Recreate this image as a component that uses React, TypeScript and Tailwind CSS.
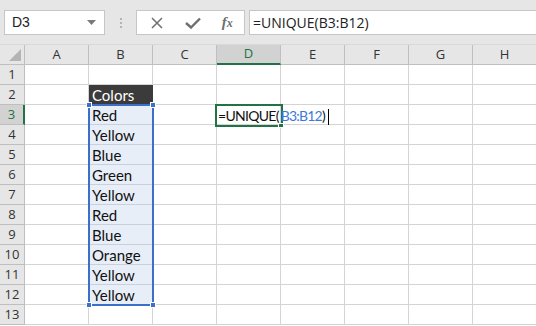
import React from "react";

const cols = ["A", "B", "C", "D", "E", "F", "G", "H"];
const colors = ["Red", "Yellow", "Blue", "Green", "Yellow", "Red", "Blue", "Orange", "Yellow", "Yellow"];

export default function App() {
  const rows = Array.from({ length: 13 }, (_, i) => i + 1);
  return (
    <div className="w-[536px] h-[326px] overflow-hidden bg-white relative" style={{ fontFamily: "'Open Sans', 'Noto Sans', sans-serif" }}>
      {/* toolbar */}
      <div className="h-[45px] bg-[#e6e6e6] flex items-start pt-[10px] pl-[4px] border-b border-[#d9d9d9]">
        <div className="w-[101px] h-[25px] bg-white border border-[#c6c6c6] flex items-center justify-between pl-[7px] pr-[8px]">
          <span className="text-[14px] text-[#222]" style={{ fontFamily: "'Liberation Sans', Arial, sans-serif" }}>D3</span>
          <svg width="9" height="5" viewBox="0 0 9 5"><polygon points="0,0 9,0 4.5,5" fill="#7a7a7a" /></svg>
        </div>
        <div className="w-[31px] h-[25px] flex flex-col items-center justify-center gap-[2px]">
          <div className="w-[2px] h-[2px] bg-[#b4b4b4]" />
          <div className="w-[2px] h-[2px] bg-[#b4b4b4]" />
          <div className="w-[2px] h-[2px] bg-[#b4b4b4]" />
        </div>
        <div className="w-[109px] h-[25px] bg-white border border-[#c6c6c6] flex items-center">
          <div className="w-[40px] flex justify-center">
            <svg width="12" height="12" viewBox="0 0 12 12"><path d="M1 1 L11 11 M11 1 L1 11" stroke="#6f6f6f" strokeWidth="1.5" /></svg>
          </div>
          <div className="w-[34px] flex justify-center">
            <svg width="16" height="12" viewBox="0 0 16 12"><path d="M1 6 L6 10.5 L15 1.5" stroke="#6f6f6f" strokeWidth="2.4" fill="none" /></svg>
          </div>
          <div className="w-[34px] flex justify-center">
            <span className="text-[15px] italic text-[#6f6f6f] font-bold" style={{ fontFamily: "'Liberation Serif', 'Times New Roman', serif" }}>f<span className="text-[12px]">x</span></span>
          </div>
        </div>
        <div className="ml-[4px] flex-1 h-[25px] bg-white border border-[#c6c6c6] border-r-0 flex items-center pl-[3px]">
          <span className="text-[14px] text-[#222]" style={{ fontFamily: "'Open Sans', sans-serif" }}>=UNIQUE(B3:B12)</span>
        </div>
      </div>

      {/* grid */}
      <div className="grid grid-cols-[25px_repeat(8,64px)] auto-rows-[20px]">
        <div className="bg-[#e6e6e6] border-r border-b border-[#bfbfbf] relative">
          <svg className="absolute right-[3px] bottom-[3px]" width="12" height="12" viewBox="0 0 12 12"><polygon points="12,0 12,12 0,12" fill="#b4b4b4" /></svg>
        </div>
        {cols.map((c) => (
          <div
            key={c}
            className={
              c === "D"
                ? "bg-[#d2d2d2] border-r border-[#bfbfbf] border-b-2 border-b-[#217346] flex items-center justify-center text-[13px] text-[#217346]"
                : "bg-[#e6e6e6] border-r border-b border-[#bfbfbf] flex items-center justify-center text-[13px] text-[#333]"
            }
          >
            {c}
          </div>
        ))}
        {rows.map((r) => (
          <React.Fragment key={r}>
            <div
              className={
                r === 3
                  ? "bg-[#d2d2d2] border-b border-[#bfbfbf] border-r-2 border-r-[#217346] flex items-center justify-center text-[13px] text-[#217346]"
                  : "bg-[#e6e6e6] border-r border-b border-[#bfbfbf] flex items-center justify-center text-[13px] text-[#333]"
              }
            >
              {r}
            </div>
            {cols.map((c) => {
              const isB = c === "B";
              const header = isB && r === 2;
              const data = isB && r >= 3 && r <= 12;
              let cls = "border-r border-b border-[#d4d4d4] text-[15px] text-[#111] pl-[3px] pt-[1px] leading-[19px] whitespace-nowrap";
              if (header) cls = "bg-[#3b3b3b] text-white border-r border-b border-[#3b3b3b] text-[15px] pl-[3px] pt-[1px] leading-[19px]";
              if (data) cls = "bg-[#e8eef8] border-r border-b border-[#c8d0dc] text-[15px] text-[#111] pl-[3px] pt-[1px] leading-[19px]";
              let content: React.ReactNode = null;
              if (header) content = "Colors";
              if (data) content = colors[r - 3];
              if (c === "D" && r === 3)
                content = (
                  <span className="relative z-10 -ml-[2px] text-[14px] tracking-[-0.7px]">
                    =UNIQUE(<span className="ml-[2px] text-[#3c78d8] tracking-[-0.8px]">B3:B12</span>)
                    <span className="inline-block w-[1px] h-[16px] bg-black ml-[3px] align-middle" />
                  </span>
                );
              return (
                <div key={c} className={cls + " overflow-visible"} style={{ fontFamily: "Lato, 'Open Sans', sans-serif" }}>
                  {content}
                </div>
              );
            })}
          </React.Fragment>
        ))}
      </div>

      {/* range selection B3:B12 */}
      <div className="absolute left-[88px] top-[104px] w-[66px] h-[202px] border-2 border-[#3a6fca] pointer-events-none">
        <div className="absolute -left-[4px] -top-[4px] w-[6px] h-[6px] bg-[#3a6fca] border border-white" />
        <div className="absolute -right-[4px] -top-[4px] w-[6px] h-[6px] bg-[#3a6fca] border border-white" />
        <div className="absolute -left-[4px] -bottom-[4px] w-[6px] h-[6px] bg-[#3a6fca] border border-white" />
        <div className="absolute -right-[4px] -bottom-[4px] w-[6px] h-[6px] bg-[#3a6fca] border border-white" />
      </div>

      {/* active cell D3 */}
      <div className="absolute left-[215px] top-[104px] w-[68px] h-[23px] border-2 border-[#217346] pointer-events-none">
        <div className="absolute -right-[3px] -bottom-[3px] w-[6px] h-[5px] bg-[#217346] border border-white" />
      </div>
    </div>
  );
}
